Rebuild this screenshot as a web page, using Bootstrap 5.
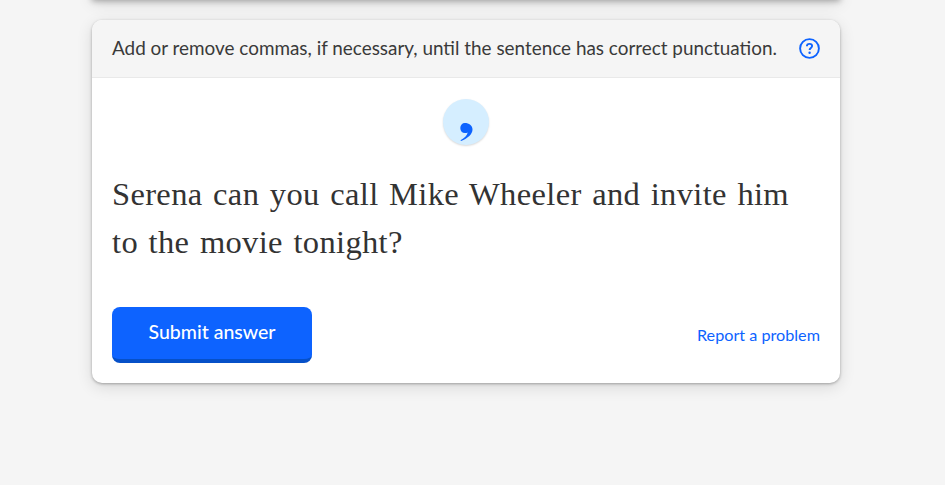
<!DOCTYPE html>
<html lang="en">
<head>
    <meta charset="UTF-8">
    <meta name="viewport" content="width=device-width, initial-scale=1.0">
    <title>Comma practice</title>
    <link href="https://cdn.jsdelivr.net/npm/bootstrap@5.3.0/dist/css/bootstrap.min.css" rel="stylesheet">
    <style>
        html, body {
            height: 100%;
            overflow: hidden;
        }
        body {
            background-color: #f5f5f5;
            color: #333;
            font-family: "Lato", "Noto Sans", sans-serif;
            padding-right: 13px;
        }
        .page-col {
            width: 748px;
        }
        .prev-edge {
            height: 40px;
            margin-top: -41px;
            margin-bottom: 21px;
            background-color: #fff;
            box-shadow: 0 2px 6px rgba(0, 0, 0, .3), 0 4px 16px rgba(0, 0, 0, .12);
        }
        .task-card {
            border: 0;
            border-radius: 10px;
            box-shadow: 0 1px 3px rgba(0, 0, 0, .3), 0 4px 16px rgba(0, 0, 0, .12);
            height: 363px;
        }
        .task-head {
            height: 58px;
            padding: 0 20px;
            background-color: #f5f5f5;
            border-bottom: 1px solid #e9e9e9;
            border-radius: 10px 10px 0 0;
            font-size: 18.9px;
            color: #3a3a3a;
        }
        .help-icon {
            width: 21px;
            height: 21px;
            color: #0d63ff;
        }
        .task-body {
            padding: 21px 20px 20px;
        }
        .comma-badge {
            width: 46px;
            height: 46px;
            background-color: #d5eeff;
            box-shadow: 0 1px 2px rgba(0, 0, 0, .15);
        }
        .comma-badge svg {
            width: 13px;
            height: 18px;
            margin-top: 24px;
        }
        .sentence {
            margin: 25px 0 0;
            font-family: "Liberation Serif", serif;
            font-size: 32.5px;
            line-height: 48px;
            letter-spacing: .35px;
            word-spacing: 2.1px;
            color: #333;
        }
        .submit-btn {
            width: 200px;
            height: 56px;
            padding: 0 0 3px;
            border: 0;
            border-bottom: 4px solid #0650c8;
            border-radius: 8px;
            background-color: #0d63ff;
            color: #fff;
            font-size: 19.5px;
            font-weight: 500;
        }
        .report-link {
            color: #0d63ff;
            font-size: 16.2px;
            text-decoration: none;
            margin-bottom: 16px;
        }
        .action-row {
            margin-top: 41px;
        }
    </style>
</head>
<body>
    <div class="page-col mx-auto">
        <div class="prev-edge"></div>
        <div class="card task-card">
            <div class="task-head d-flex align-items-center justify-content-between">
                <span>Add or remove commas, if necessary, until the sentence has correct punctuation.</span>
                <svg class="help-icon" viewBox="0 0 21 21" fill="none">
                    <circle cx="10.5" cy="10.5" r="9.4" stroke="currentColor" stroke-width="1.9"/>
                    <path d="M7.9 8.3c0-1.500 1.100-2.400 2.600-2.400s2.600.9 2.600 2.200c0 1.900-2.500 1.900-2.500 3.900" stroke="currentColor" stroke-width="1.9"/>
                    <circle cx="10.6" cy="14.800" r="1.2" fill="currentColor"/>
                </svg>
            </div>
            <div class="task-body">
                <div class="d-flex justify-content-center">
                    <div class="comma-badge rounded-circle d-flex justify-content-center">
                        <svg viewBox="0 0 13 18"><path d="M4.800 0C9 0 12.500 2.500 12.500 6.500 12.500 11 8 15.300 1 18L.5 17.200C4.500 15 7 12.800 7.700 9.500 6.800 9.900 5.900 10 5 10 2.200 10 .3 8 .3 5 .3 2 2.300 0 4.800 0z" fill="#0d63ff"/></svg>
                    </div>
                </div>
                <p class="sentence">Serena can you call Mike Wheeler and invite him to the movie tonight?</p>
                <div class="action-row d-flex justify-content-between align-items-end">
                    <button type="button" class="btn submit-btn">Submit answer</button>
                    <a href="#" class="report-link">Report a problem</a>
                </div>
            </div>
        </div>
    </div>
    <script src="https://cdn.jsdelivr.net/npm/bootstrap@5.3.0/dist/js/bootstrap.bundle.min.js"></script>
</body>
</html>
